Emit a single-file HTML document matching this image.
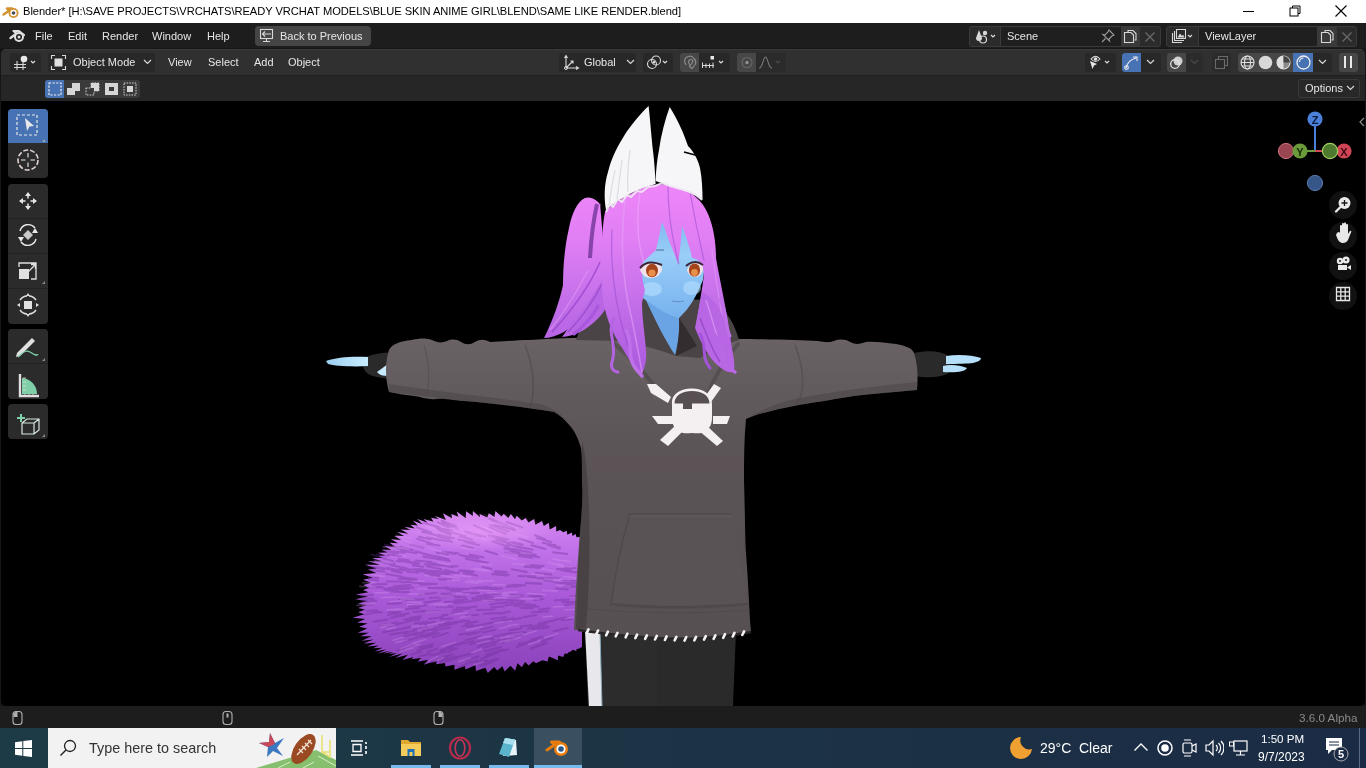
<!DOCTYPE html>
<html><head><meta charset="utf-8">
<style>
*{margin:0;padding:0;box-sizing:border-box}
html,body{width:1366px;height:768px;overflow:hidden;background:#161616;font-family:"Liberation Sans",sans-serif}
.a{position:absolute}
.t{position:absolute;white-space:nowrap;line-height:1;will-change:transform}
#title{left:0;top:0;width:1366px;height:23px;background:#fff}
#topbar{left:0;top:23px;width:1366px;height:26px;background:#1d1d1d;border-bottom:1px solid #171717}
#hdr{left:1px;top:49px;width:1364px;height:26px;background:#303030;border-radius:5px 5px 0 0}
#tset{left:1px;top:75px;width:1364px;height:26px;background:#262626;border-top:1px solid #1e1e1e}
#vp{left:1px;top:101px;width:1364px;height:605px;background:#000;border-radius:0 0 5px 5px}
#status{left:0;top:706px;width:1366px;height:22px;background:#1d1d1d}
#taskbar{left:0;top:728px;width:1366px;height:40px;background:linear-gradient(90deg,#1d3a47 0%,#1c3545 40%,#1b2b45 100%)}
.btn{position:absolute;background:#2b2b2b;border-radius:3px}
.ui{color:#e6e6e6;font-size:11px}
</style></head><body>
<div id="title" class="a">
  <svg class="a" style="left:2px;top:4px" width="18" height="15" viewBox="0 0 18 15">
    <path d="M1.5 10.5 L7.5 6.5 L5 4.5 L10 4.5 L14.5 7.5" fill="none" stroke="#d4922e" stroke-width="2.4" stroke-linecap="round" stroke-linejoin="round"/>
    <circle cx="11.5" cy="9" r="5" fill="#d4922e"/><circle cx="11.5" cy="9" r="3.2" fill="#fff"/><circle cx="11.5" cy="9" r="1.8" fill="#4a4a4a"/>
  </svg>
  <div class="t" style="left:23px;top:6px;font-size:11.15px;color:#000;letter-spacing:-0.05px">Blender* [H:\SAVE PROJECTS\VRCHATS\READY VRCHAT MODELS\BLUE SKIN ANIME GIRL\BLEND\SAME LIKE RENDER.blend]</div>
  <div class="a" style="left:1243px;top:11px;width:11px;height:1px;background:#000"></div>
  <svg class="a" style="left:1288px;top:4px" width="14" height="14" viewBox="0 0 14 14"><rect x="2" y="4" width="8" height="8" fill="none" stroke="#000" stroke-width="1"/><path d="M4.5 4 V2 H12 V9.5 H10" fill="none" stroke="#000" stroke-width="1"/></svg>
  <svg class="a" style="left:1334px;top:4px" width="14" height="14" viewBox="0 0 14 14"><path d="M1.5 1.5 L12.5 12.5 M12.5 1.5 L1.5 12.5" stroke="#000" stroke-width="1.1"/></svg>
</div>
<div id="topbar" class="a">
  <svg class="a" style="left:9px;top:5px" width="17" height="15" viewBox="0 0 17 15">
    <path d="M1.5 10 L7.5 5.5 L4.5 3 L10 3 L15 7" fill="none" stroke="#e0e0e0" stroke-width="2.2" stroke-linecap="round" stroke-linejoin="round"/>
    <circle cx="10" cy="9" r="5" fill="#e0e0e0"/><circle cx="10" cy="9" r="3" fill="#1d1d1d"/><circle cx="10" cy="9" r="1.5" fill="#e0e0e0"/>
  </svg>
  <div class="t ui" style="left:35px;top:8px">File</div>
  <div class="t ui" style="left:68px;top:8px">Edit</div>
  <div class="t ui" style="left:102px;top:8px">Render</div>
  <div class="t ui" style="left:152px;top:8px">Window</div>
  <div class="t ui" style="left:207px;top:8px">Help</div>
  <div class="btn" style="left:255px;top:3px;width:116px;height:20px;background:#454545;border-radius:4px"></div>
  <svg class="a" style="left:259px;top:5px" width="15" height="16" viewBox="0 0 15 16"><rect x="1.5" y="1.5" width="12" height="9" fill="none" stroke="#d8d8d8" stroke-width="1.1"/><path d="M7.5 10.5 V13.5 M4 13.5 H11 M12 6 H3.5 M6 3.5 L3.5 6 L6 8.5" fill="none" stroke="#d8d8d8" stroke-width="1.1"/></svg>
  <div class="t ui" style="left:280px;top:8px">Back to Previous</div>
  <!-- scene -->
  <div class="btn" style="left:969px;top:3px;width:192px;height:21px;background:#2b2b2b;border:1px solid #3a3a3a"></div>
  <div class="a" style="left:1000px;top:4px;width:121px;height:19px;background:#1f1f1f;border-left:1px solid #3a3a3a"></div>
  <div class="a" style="left:1121px;top:4px;width:19px;height:19px;background:#3a3a3a"></div>
  <svg class="a" style="left:974px;top:5px" width="24" height="17" viewBox="0 0 24 17"><path d="M5 2 L2 10 A3 3 0 0 0 8 10 Z" fill="#d8d8d8"/><circle cx="11" cy="5" r="2.2" fill="#d8d8d8"/><circle cx="9" cy="11.5" r="3.5" fill="none" stroke="#d8d8d8" stroke-width="1.2"/><path d="M17 7 L19 9 L21 7" fill="none" stroke="#d8d8d8" stroke-width="1.2"/></svg>
  <div class="t ui" style="left:1007px;top:8px">Scene</div>
  <svg class="a" style="left:1100px;top:5px" width="16" height="16" viewBox="0 0 16 16"><path d="M9 2 L14 7 L12 8 L9 11 L9.5 13 L3 6.5 L5 7 L8 4 Z M5.5 10.5 L2 14" fill="none" stroke="#9a9a9a" stroke-width="1.1"/></svg>
  <svg class="a" style="left:1123px;top:6px" width="15" height="15" viewBox="0 0 15 15"><path d="M5 3 V1.5 H10 L13 4.5 V11 H11.5 M1.5 3.5 H8 L10.5 6 V13.5 H1.5 Z" fill="none" stroke="#d8d8d8" stroke-width="1.1"/></svg>
  <svg class="a" style="left:1144px;top:8px" width="12" height="12" viewBox="0 0 12 12"><path d="M1.5 1.5 L10.5 10.5 M10.5 1.5 L1.5 10.5" stroke="#6a6a6a" stroke-width="1.2"/></svg>
  <!-- viewlayer -->
  <div class="btn" style="left:1166px;top:3px;width:191px;height:21px;background:#2b2b2b;border:1px solid #3a3a3a"></div>
  <div class="a" style="left:1198px;top:4px;width:119px;height:19px;background:#1f1f1f;border-left:1px solid #3a3a3a"></div>
  <div class="a" style="left:1317px;top:4px;width:20px;height:19px;background:#3a3a3a"></div>
  <svg class="a" style="left:1171px;top:5px" width="24" height="17" viewBox="0 0 24 17"><path d="M1.5 5 V14.5 H11 M3.5 3 V12.5 H13 M5.5 1.5 H14.5 V10.5 H5.5 Z" fill="none" stroke="#d8d8d8" stroke-width="1.1"/><path d="M6.5 9.5 L9 5.5 L11 8 L12 6.5 L13.5 9.5 Z" fill="#d8d8d8"/><path d="M17 7 L19 9 L21 7" fill="none" stroke="#d8d8d8" stroke-width="1.2"/></svg>
  <div class="t ui" style="left:1205px;top:8px">ViewLayer</div>
  <svg class="a" style="left:1320px;top:6px" width="15" height="15" viewBox="0 0 15 15"><path d="M5 3 V1.5 H10 L13 4.5 V11 H11.5 M1.5 3.5 H8 L10.5 6 V13.5 H1.5 Z" fill="none" stroke="#d8d8d8" stroke-width="1.1"/></svg>
  <svg class="a" style="left:1341px;top:8px" width="12" height="12" viewBox="0 0 12 12"><path d="M1.5 1.5 L10.5 10.5 M10.5 1.5 L1.5 10.5" stroke="#6a6a6a" stroke-width="1.2"/></svg>
</div>
<div id="hdr" class="a">
  <div class="a" style="left:3px;top:0;width:1358px;height:1px;background:#3a3a3a"></div>
  <!-- editor type -->
  <div class="btn" style="left:9px;top:4px;width:31px;height:19px;background:#282828"></div>
  <svg class="a" style="left:11px;top:5px" width="28" height="17" viewBox="0 0 28 17"><path d="M2 10.5 H14 M2 13.5 H14 M5 7 V16 M11 7 V16" stroke="#d8d8d8" stroke-width="1.1" fill="none"/><circle cx="12" cy="5" r="3.3" fill="#e8e8e8"/><path d="M19 7 L21 9 L23 7" fill="none" stroke="#d8d8d8" stroke-width="1.2"/></svg>
  <!-- mode -->
  <div class="btn" style="left:47px;top:4px;width:107px;height:19px;background:#282828"></div>
  <svg class="a" style="left:49px;top:4.5px" width="17" height="17" viewBox="0 0 17 17"><path d="M1.5 5 V1.5 H5 M12 1.5 H15.5 V5 M15.5 12 V15.5 H12 M5 15.5 H1.5 V12" fill="none" stroke="#d8d8d8" stroke-width="1.1"/><rect x="4.5" y="4.5" width="8" height="8" fill="#e0e0e0"/></svg>
  <div class="t ui" style="left:72px;top:8px">Object Mode</div>
  <svg class="a" style="left:142px;top:10px" width="9" height="6" viewBox="0 0 9 6"><path d="M1 1 L4.5 4.5 L8 1" fill="none" stroke="#d8d8d8" stroke-width="1.2"/></svg>
  <div class="t ui" style="left:167px;top:8px">View</div>
  <div class="t ui" style="left:207px;top:8px">Select</div>
  <div class="t ui" style="left:253px;top:8px">Add</div>
  <div class="t ui" style="left:287px;top:8px">Object</div>
  <!-- global -->
  <div class="btn" style="left:558px;top:4px;width:77px;height:19px;background:#282828"></div>
  <svg class="a" style="left:562px;top:4px" width="18" height="19" viewBox="0 0 18 19"><path d="M3 15 V3 M1.5 5 L3 2.5 L4.5 5 M3 15 H15 M13 13.5 L15.5 15 L13 16.5 M3 15 L10 8 M7.5 8 H10 V10.5" fill="none" stroke="#d8d8d8" stroke-width="1.1"/><circle cx="3" cy="15" r="1.5" fill="none" stroke="#d8d8d8"/></svg>
  <div class="t ui" style="left:583px;top:8px">Global</div>
  <svg class="a" style="left:625px;top:10px" width="9" height="6" viewBox="0 0 9 6"><path d="M1 1 L4.5 4.5 L8 1" fill="none" stroke="#d8d8d8" stroke-width="1.2"/></svg>
  <!-- pivot -->
  <div class="btn" style="left:642px;top:4px;width:30px;height:19px;background:#282828"></div>
  <svg class="a" style="left:645px;top:5px" width="26" height="17" viewBox="0 0 26 17"><circle cx="6" cy="10" r="4.5" fill="none" stroke="#d8d8d8" stroke-width="1.1"/><circle cx="10" cy="6.5" r="4.5" fill="none" stroke="#d8d8d8" stroke-width="1.1"/><circle cx="8" cy="8.3" r="1.3" fill="#e8e8e8"/><path d="M17 7 L19 9 L21 7" fill="none" stroke="#d8d8d8" stroke-width="1.2"/></svg>
  <!-- snap -->
  <div class="btn" style="left:679px;top:4px;width:50px;height:19px;background:#282828"></div>
  <div class="a" style="left:679px;top:4px;width:19px;height:19px;background:#474747;border-radius:3px 0 0 3px"></div>
  <svg class="a" style="left:681px;top:5px" width="16" height="17" viewBox="0 0 16 17"><path d="M4 11 L2.5 7.5 A5.2 5.2 0 0 1 12 4.5 A5.2 5.2 0 0 1 13.5 10 L10 14.5 L7.5 12.5 L10.5 8.5 A1.8 1.8 0 0 0 7 6.5 L6.5 8 L8 12" fill="none" stroke="#8a8a8a" stroke-width="1.2" stroke-linejoin="round"/></svg>
  <svg class="a" style="left:700px;top:5px" width="28" height="17" viewBox="0 0 28 17"><path d="M1 11.5 H13 M1.5 8.5 V14 M5 9.5 V14 M8.5 9.5 V14 M12 8.5 V14" stroke="#d8d8d8" stroke-width="1"/><rect x="9.5" y="2" width="3.5" height="3.5" fill="#e8e8e8"/><path d="M18 7 L20 9 L22 7" fill="none" stroke="#d8d8d8" stroke-width="1.2"/></svg>
  <!-- proportional -->
  <div class="btn" style="left:736px;top:4px;width:49px;height:19px;background:#2b2b2b"></div>
  <div class="a" style="left:736px;top:4px;width:19px;height:19px;background:#474747;border-radius:3px 0 0 3px"></div>
  <svg class="a" style="left:738px;top:5px" width="16" height="17" viewBox="0 0 16 17"><circle cx="8" cy="8.5" r="5" fill="none" stroke="#6a6a6a" stroke-width="1.1"/><circle cx="8" cy="8.5" r="1.6" fill="#9a9a9a"/></svg>
  <svg class="a" style="left:757px;top:5px" width="27" height="17" viewBox="0 0 27 17"><path d="M1 14 C5 14 5 3 7.5 3 C10 3 10 14 14 14" fill="none" stroke="#7a7a7a" stroke-width="1.1"/><path d="M18 7 L20 9 L22 7" fill="none" stroke="#4a4a4a" stroke-width="1.2"/></svg>
  <!-- visibility -->
  <div class="btn" style="left:1084px;top:4px;width:31px;height:19px;background:#282828"></div>
  <svg class="a" style="left:1086px;top:4px" width="28" height="19" viewBox="0 0 28 19"><path d="M4 6 Q8.5 0.5 13 6 Q8.5 11 4 6 Z" fill="none" stroke="#e0e0e0" stroke-width="1.1"/><circle cx="8.5" cy="6" r="1.8" fill="#e0e0e0"/><path d="M3 8 L10 11 L7 12.5 L5.5 16 Z" fill="#e8e8e8"/><path d="M18 8 L20 10 L22 8" fill="none" stroke="#d8d8d8" stroke-width="1.2"/></svg>
  <!-- gizmo -->
  <div class="btn" style="left:1121px;top:4px;width:39px;height:19px;background:#282828"></div>
  <div class="a" style="left:1121px;top:4px;width:19px;height:19px;background:#4772b3;border-radius:3px 0 0 3px"></div>
  <svg class="a" style="left:1122px;top:5px" width="17" height="17" viewBox="0 0 17 17"><path d="M3 14 Q5 6 13 4 M10 3 H14 V7" fill="none" stroke="#f0f0f0" stroke-width="1.1"/><circle cx="3.5" cy="13.5" r="1.8" fill="none" stroke="#f0f0f0" stroke-width="1.1"/></svg>
  <svg class="a" style="left:1145px;top:10px" width="9" height="6" viewBox="0 0 9 6"><path d="M1 1 L4.5 4.5 L8 1" fill="none" stroke="#d8d8d8" stroke-width="1.2"/></svg>
  <!-- overlay -->
  <div class="btn" style="left:1166px;top:4px;width:36px;height:19px;background:#2b2b2b"></div>
  <div class="a" style="left:1166px;top:4px;width:19px;height:19px;background:#474747;border-radius:3px 0 0 3px"></div>
  <svg class="a" style="left:1167px;top:5px" width="17" height="17" viewBox="0 0 17 17"><circle cx="10" cy="7" r="4.5" fill="#d0d0d0"/><circle cx="7" cy="10" r="4.3" fill="none" stroke="#e0e0e0" stroke-width="1.3"/></svg>
  <svg class="a" style="left:1189px;top:10px" width="9" height="6" viewBox="0 0 9 6"><path d="M1 1 L4.5 4.5 L8 1" fill="none" stroke="#4a4a4a" stroke-width="1.2"/></svg>
  <!-- xray -->
  <div class="btn" style="left:1211px;top:4px;width:19px;height:19px;background:#2b2b2b"></div>
  <svg class="a" style="left:1213px;top:6px" width="15" height="15" viewBox="0 0 15 15"><path d="M1.5 4.5 H10.5 V13.5 H1.5 Z M4.5 4.5 V1.5 H13.5 V10.5 H10.5" fill="none" stroke="#6a6a6a" stroke-width="1.1"/></svg>
  <!-- shading -->
  <div class="btn" style="left:1237px;top:4px;width:94px;height:19px;background:#282828"></div>
  <div class="a" style="left:1237px;top:4px;width:75px;height:19px;background:#474747;border-radius:3px 0 0 3px"></div>
  <div class="a" style="left:1292px;top:4px;width:20px;height:19px;background:#4772b3"></div>
  <svg class="a" style="left:1238px;top:5px" width="17" height="17" viewBox="0 0 17 17"><circle cx="8.5" cy="8.5" r="6.5" fill="none" stroke="#e0e0e0" stroke-width="1.1"/><ellipse cx="8.5" cy="8.5" rx="3" ry="6.5" fill="none" stroke="#e0e0e0" stroke-width="1.1"/><path d="M2 8.5 H15 M3 5 H14 M3 12 H14" stroke="#e0e0e0" stroke-width="1"/></svg>
  <svg class="a" style="left:1256px;top:5px" width="17" height="17" viewBox="0 0 17 17"><circle cx="8.5" cy="8.5" r="6.8" fill="#d8d8d8"/></svg>
  <svg class="a" style="left:1274px;top:5px" width="17" height="17" viewBox="0 0 17 17"><circle cx="8.5" cy="8.5" r="6.5" fill="#8a8a8a" stroke="#e0e0e0" stroke-width="1.1"/><path d="M8.5 2 A6.5 6.5 0 0 0 2 8.5 A6.5 6.5 0 0 0 8.5 15 V8.5 Z" fill="#e0e0e0"/><path d="M8.5 8.5 L15 8.5 A6.5 6.5 0 0 0 8.5 2 Z" fill="#444"/></svg>
  <svg class="a" style="left:1294px;top:5px" width="17" height="17" viewBox="0 0 17 17"><circle cx="8.5" cy="8.5" r="6.5" fill="none" stroke="#f0f0f0" stroke-width="1.3"/><path d="M4.5 8 A4 4 0 0 1 8.5 4" fill="none" stroke="#f0f0f0" stroke-width="1.1"/></svg>
  <svg class="a" style="left:1317px;top:10px" width="9" height="6" viewBox="0 0 9 6"><path d="M1 1 L4.5 4.5 L8 1" fill="none" stroke="#d8d8d8" stroke-width="1.2"/></svg>
  <!-- pause -->
  <div class="btn" style="left:1338px;top:4px;width:19px;height:19px;background:#474747"></div>
  <div class="a" style="left:1343px;top:7px;width:2px;height:12px;background:#e8e8e8"></div>
  <div class="a" style="left:1349px;top:7px;width:2px;height:12px;background:#e8e8e8"></div>
</div>
<div id="tset" class="a">
  <div class="btn" style="left:44px;top:4px;width:95px;height:18px;background:#3a3a3a"></div>
  <div class="a" style="left:44px;top:4px;width:19px;height:18px;background:#4772b3;border-radius:3px 0 0 3px"></div>
  <svg class="a" style="left:46px;top:5px" width="92" height="16" viewBox="0 0 92 16">
    <rect x="2" y="2" width="12" height="12" fill="none" stroke="#f0f0f0" stroke-width="1.2" stroke-dasharray="2.2 1.4"/>
    <path d="M20 7 H25 V2 H33 V10 H28 V14 H20 Z" fill="#d6d6d6"/>
    <path d="M39 7 H44 V2 H52 V10 H47 V14 H39 Z" fill="none" stroke="#d6d6d6" stroke-width="1" stroke-dasharray="1.5 1.2"/><path d="M44 2 H52 V10 H47 V7 H44 Z" fill="#d6d6d6"/>
    <path d="M58 2 H71 V14 H58 Z M62 6 V10 H67 V6 Z" fill="#d6d6d6" fill-rule="evenodd"/>
    <rect x="77" y="2" width="12" height="12" fill="none" stroke="#d6d6d6" stroke-width="1" stroke-dasharray="1.5 1.2"/><rect x="80" y="5" width="6" height="6" fill="#d6d6d6"/>
  </svg>
  <div class="btn" style="left:1297px;top:3px;width:62px;height:19px;background:#282828;border:1px solid #3a3a3a"></div>
  <div class="t ui" style="left:1304px;top:7px">Options</div>
  <svg class="a" style="left:1345px;top:9px" width="9" height="6" viewBox="0 0 9 6"><path d="M1 1 L4.5 4.5 L8 1" fill="none" stroke="#d8d8d8" stroke-width="1.2"/></svg>
</div>
<div id="vp" class="a"></div>
<svg class="a" style="left:0;top:0" width="1366" height="768" viewBox="0 0 1366 768">
<defs>
  <clipPath id="vpc"><rect x="1" y="101" width="1364" height="605"/></clipPath>
  <linearGradient id="tailg" x1="0" y1="0" x2="0" y2="1">
    <stop offset="0" stop-color="#d88af2"/><stop offset="0.25" stop-color="#c070e8"/><stop offset="0.55" stop-color="#a858d6"/><stop offset="1" stop-color="#8a42ba"/>
  </linearGradient>
  <linearGradient id="hairg" gradientUnits="userSpaceOnUse" x1="0" y1="185" x2="0" y2="375">
    <stop offset="0" stop-color="#ee86f8"/><stop offset="0.3" stop-color="#e07ef4"/><stop offset="0.6" stop-color="#c470ea"/><stop offset="1" stop-color="#aa58de"/>
  </linearGradient>
  <linearGradient id="hoodg" gradientUnits="userSpaceOnUse" x1="0" y1="337" x2="0" y2="641">
    <stop offset="0" stop-color="#6a6264"/><stop offset="0.2" stop-color="#615a5c"/><stop offset="0.4" stop-color="#5b5355"/><stop offset="1" stop-color="#575052"/>
  </linearGradient>
  <linearGradient id="faceg" x1="0" y1="0" x2="0" y2="1">
    <stop offset="0" stop-color="#7eb8ee"/><stop offset="0.35" stop-color="#98cef8"/><stop offset="1" stop-color="#78b2ee"/>
  </linearGradient>
  <linearGradient id="fingg" x1="0" y1="0" x2="1" y2="0">
    <stop offset="0" stop-color="#9ccff0"/><stop offset="1" stop-color="#c8ecff"/>
  </linearGradient>
  <radialGradient id="tailhl" cx="0.5" cy="0.5" r="0.5">
    <stop offset="0" stop-color="#f4a8fc" stop-opacity="0.55"/><stop offset="1" stop-color="#f4a8fc" stop-opacity="0"/>
  </radialGradient>
</defs>
<g clip-path="url(#vpc)">
  <!-- tail -->
  <path d="M582.0 538.0 L580.8 537.6 L579.4 537.1 L576.5 537.2 L575.6 534.0 L572.5 535.9 L571.9 532.5 L567.3 534.7 L566.7 530.8 L563.3 532.2 L560.1 529.9 L556.3 531.4 L556.1 525.9 L549.7 529.4 L548.8 522.7 L543.8 525.9 L542.0 521.1 L535.4 524.8 L534.2 518.9 L528.4 522.5 L525.8 518.0 L521.8 520.5 L516.7 515.8 L515.0 519.2 L510.9 513.9 L508.3 518.0 L503.7 513.8 L501.6 516.6 L495.4 510.9 L494.4 516.9 L488.9 513.3 L487.2 517.6 L479.6 514.1 L480.1 517.3 L472.9 510.9 L472.8 516.0 L466.1 511.2 L465.8 518.2 L456.7 511.4 L458.4 516.8 L451.4 514.1 L452.0 518.2 L442.9 513.3 L445.9 520.0 L434.9 515.9 L438.7 519.3 L431.1 517.7 L433.5 521.7 L423.6 519.1 L427.8 522.8 L417.3 519.1 L422.9 524.4 L412.7 520.5 L417.9 525.6 L410.2 524.7 L415.0 528.6 L404.2 526.8 L410.5 530.1 L400.8 529.4 L408.3 533.8 L397.0 532.1 L404.0 536.0 L394.4 536.1 L401.5 539.9 L390.9 539.2 L398.0 543.2 L389.5 542.8 L395.4 547.0 L384.3 545.9 L391.3 549.8 L381.8 549.8 L387.7 552.6 L378.0 552.7 L385.3 555.5 L378.4 556.0 L382.8 558.1 L372.1 557.9 L382.2 561.5 L368.1 561.2 L380.0 564.7 L364.9 564.7 L376.9 568.3 L368.2 569.6 L376.3 573.0 L362.5 574.2 L372.7 577.7 L363.1 579.8 L371.2 582.7 L363.2 585.0 L369.4 587.7 L362.9 590.0 L368.5 592.3 L355.8 594.6 L367.9 596.6 L355.5 599.2 L367.6 600.9 L357.8 603.5 L366.7 605.1 L358.0 607.9 L365.1 609.6 L358.2 612.3 L364.4 614.2 L352.6 617.8 L365.3 618.9 L357.1 622.5 L367.6 623.4 L359.1 626.8 L367.2 628.5 L357.8 632.7 L368.9 632.7 L360.2 636.2 L371.6 636.2 L361.7 640.7 L373.6 639.6 L363.5 643.5 L376.2 642.8 L367.2 646.4 L379.0 645.6 L372.9 648.2 L382.5 647.8 L374.5 651.6 L386.2 649.6 L377.6 653.4 L389.9 650.8 L383.6 653.6 L393.5 651.8 L388.7 653.8 L396.7 653.3 L388.9 656.9 L402.5 653.4 L395.3 657.9 L407.9 654.8 L402.5 659.9 L413.6 656.9 L411.3 659.3 L421.0 658.1 L417.6 661.7 L428.4 659.8 L423.6 664.8 L436.8 660.7 L436.1 664.3 L444.8 662.9 L445.5 666.4 L454.4 664.8 L454.5 669.7 L464.8 666.0 L465.5 669.6 L475.4 665.3 L476.0 670.9 L485.3 667.7 L487.8 673.1 L494.2 666.9 L497.2 670.4 L502.4 666.2 L504.6 671.6 L510.5 665.8 L515.1 670.7 L517.5 663.3 L521.8 667.3 L525.1 662.1 L528.7 665.6 L533.2 661.2 L536.1 663.3 L542.3 660.2 L547.6 661.5 L548.9 656.4 L558.0 660.3 L557.9 655.4 L563.3 657.1 L564.8 653.6 L567.3 653.8 L569.3 651.5 L569.9 652.3 L572.8 649.7 L576.3 651.1 L576.6 648.9 L578.6 648.8 L579.6 648.2 L580.5 647.8 L581.3 647.3 L582.0 647.0 Z" fill="url(#tailg)"/>
  <path d="M520.0 547.9 l-12.7 -3.9 M472.8 625.1 l-10.5 1.3 M522.8 596.1 l-14.5 1.1 M543.6 566.1 l-17.2 -1.0 M386.4 584.1 l-14.0 0.2 M406.4 568.3 l-15.8 -3.2 M477.4 660.4 l-9.3 2.9 M414.2 645.6 l-17.0 5.0 M412.6 598.4 l-13.5 0.7 M583.2 595.4 l-12.6 1.0 M477.0 621.6 l-9.5 1.5 M567.9 589.5 l-11.8 -0.9 M411.1 552.1 l-14.7 -3.7 M505.6 533.7 l-14.5 -5.8 M423.6 547.7 l-13.4 -3.3 M459.8 597.4 l-10.4 -0.4 M419.7 629.1 l-15.7 4.5 M397.7 553.9 l-15.1 -3.8 M552.7 581.2 l-16.0 -2.2 M412.6 620.4 l-16.7 4.2 M480.3 631.7 l-13.1 3.3 M376.3 600.8 l-13.6 0.8 M579.2 587.3 l-15.9 -1.0 M555.4 545.2 l-12.8 -2.5 M546.0 623.7 l-16.4 3.2 M501.1 593.6 l-17.8 1.3 M383.7 569.3 l-12.9 -2.9 M509.8 611.6 l-10.9 2.1 M443.0 617.0 l-14.0 1.9 M523.7 632.3 l-17.7 1.9 M532.0 556.5 l-12.1 -3.5 M451.4 532.8 l-11.0 -2.5 M403.5 588.8 l-10.5 -0.2 M461.4 597.0 l-14.4 -0.0 M513.4 602.1 l-11.5 1.1 M535.5 576.5 l-17.1 -0.5 M463.4 589.6 l-17.7 -1.2 M549.3 608.5 l-10.0 1.1 M485.2 536.6 l-12.6 -3.2 M426.2 605.3 l-12.7 1.6 M506.7 571.9 l-11.4 -0.8 M499.4 613.0 l-15.8 0.7 M462.4 611.5 l-9.9 1.1 M387.2 619.4 l-13.8 2.4 M547.6 611.6 l-15.9 0.7 M440.2 600.3 l-15.6 2.1 M450.0 532.6 l-15.6 -6.5 M515.0 530.3 l-11.3 -3.2 M430.8 539.4 l-11.9 -2.7 M570.8 583.7 l-16.2 -1.4 M456.7 658.2 l-16.3 4.9 M449.2 572.5 l-12.5 -1.6 M493.2 637.6 l-13.2 4.2 M407.2 631.8 l-16.7 2.7 M482.5 599.6 l-14.0 1.9 M508.8 539.6 l-15.3 -3.7 M416.9 632.8 l-13.2 3.6 M546.9 643.1 l-15.9 6.0 M484.3 624.5 l-16.0 2.5 M400.5 629.2 l-17.7 3.0 M413.4 581.7 l-11.6 0.5 M436.5 535.2 l-14.4 -3.5 M381.8 586.8 l-14.2 0.8 M416.3 553.3 l-15.2 -2.8 M409.1 560.2 l-10.5 -1.2 M571.0 569.3 l-13.9 -0.3 M514.0 553.6 l-8.9 -1.8 M544.9 625.0 l-14.4 1.4 M439.4 556.9 l-16.6 -3.0 M386.3 558.5 l-14.9 -3.9 M472.0 661.3 l-13.0 6.0 M437.1 564.6 l-9.5 -1.8 M526.8 572.0 l-14.9 -2.8 M545.5 549.0 l-14.0 -3.8 M487.8 562.7 l-11.9 -2.1 M492.9 626.6 l-11.6 2.9 M499.6 531.5 l-10.2 -4.2 M458.3 528.9 l-16.3 -5.8 M511.7 633.0 l-16.1 3.1 M457.0 623.0 l-17.4 3.9 M441.5 569.3 l-14.6 -3.0 M481.1 636.3 l-15.9 4.1 M526.8 643.3 l-10.1 3.8 M448.2 587.5 l-10.1 0.8 M568.7 599.5 l-14.0 0.7 M549.5 608.2 l-10.0 1.5 M567.1 554.1 l-14.0 -1.8 M452.7 606.8 l-16.2 -0.4 M471.9 539.4 l-12.1 -3.2 M483.4 557.5 l-13.8 -3.0 M501.2 588.5 l-12.7 0.1 M484.8 596.8 l-12.8 1.4 M567.8 627.8 l-14.0 3.4 M499.7 528.5 l-9.5 -3.4 M456.1 525.8 l-14.4 -5.1 M493.8 653.5 l-9.2 3.7 M487.3 660.6 l-8.6 2.7 M440.1 527.4 l-16.4 -4.5 M436.3 592.8 l-17.3 1.8 M413.8 562.3 l-17.3 -1.2 M508.4 546.7 l-16.0 -5.5 M397.9 622.4 l-17.3 2.5 M417.6 564.1 l-15.1 -3.2 M420.3 617.7 l-16.0 1.7 M465.8 597.2 l-13.7 -0.9 M431.2 555.6 l-15.6 -4.4 M535.8 554.9 l-11.3 -2.1 M479.0 545.0 l-13.7 -3.0 M542.6 636.7 l-10.8 2.5 M495.1 648.9 l-10.4 2.3 M494.3 599.5 l-16.1 -0.3 M437.8 611.2 l-13.7 0.7 M459.2 572.7 l-10.9 -0.0 M476.7 632.2 l-17.7 2.4 M421.4 651.5 l-9.9 2.9 M531.0 552.5 l-11.1 -2.2 M503.6 524.0 l-12.0 -4.0 M415.8 570.1 l-10.6 -1.1 M413.2 550.2 l-12.8 -3.4 M559.5 548.7 l-11.8 -3.8 M448.5 559.2 l-8.9 -2.2 M455.2 656.5 l-14.8 4.4 M447.9 632.9 l-14.8 4.5 M439.5 575.7 l-9.7 -0.0 M539.1 595.9 l-9.5 -0.0 M500.2 522.8 l-11.0 -4.3 M398.2 624.0 l-11.1 2.4 M400.7 548.7 l-11.3 -2.1 M453.8 647.9 l-10.7 2.7 M493.6 639.3 l-17.4 3.6 M521.0 618.0 l-17.2 3.7 M508.4 531.5 l-12.1 -4.2 M453.1 567.2 l-13.3 -2.3 M457.3 589.3 l-10.5 0.2 M388.7 569.3 l-12.6 -2.4 M523.7 601.0 l-15.3 -0.8 M448.9 527.4 l-11.5 -5.2 M498.1 588.3 l-11.9 -0.8 M445.1 651.8 l-13.6 3.6 M409.3 588.4 l-14.5 1.1 M495.9 659.4 l-14.8 5.9 M452.8 654.4 l-9.1 2.3 M436.5 572.1 l-17.5 -3.1 M418.7 620.0 l-11.1 0.5 M455.4 553.9 l-13.3 -2.2 M506.6 602.1 l-16.3 2.5 M445.0 650.9 l-11.1 4.1 M551.0 541.9 l-14.1 -3.8 M450.0 560.9 l-15.6 -2.4 M423.3 566.7 l-10.5 -1.4 M474.7 542.4 l-16.5 -3.0 M451.7 618.4 l-11.1 0.8 M498.0 659.2 l-17.1 4.8 M431.5 627.7 l-17.8 1.9 M373.9 599.4 l-13.3 0.2 M545.7 643.8 l-11.2 2.8 M454.4 622.1 l-13.6 3.0 M476.4 536.1 l-11.0 -4.5 M399.9 611.8 l-11.5 0.5 M455.9 526.6 l-13.3 -4.2 M466.4 643.1 l-15.2 3.0 M384.6 571.8 l-15.6 -2.3 M485.1 639.5 l-15.4 4.7 M546.3 642.1 l-14.9 5.6 M373.2 604.5 l-11.0 0.5 M513.8 639.6 l-11.8 3.3 M430.0 653.8 l-11.6 2.8 M532.6 549.7 l-15.3 -3.3 M399.7 570.6 l-12.6 -2.7 M457.5 566.2 l-13.8 -0.5 M416.8 579.2 l-15.2 -2.0 M439.5 545.5 l-12.1 -1.7 M508.9 574.7 l-14.6 -2.2 M521.1 586.0 l-15.0 -0.7 M419.1 608.1 l-14.1 1.2 M401.7 588.3 l-17.9 0.5 M457.3 648.1 l-9.4 3.9 M526.0 555.6 l-15.9 -3.2 M560.2 547.4 l-11.3 -2.3 M401.7 572.9 l-9.7 -1.9 M454.3 645.4 l-13.6 5.1 M507.7 649.5 l-15.1 3.6 M443.4 565.3 l-14.4 -2.7 M522.3 545.1 l-9.9 -2.0 M521.5 628.4 l-12.1 1.8 M400.5 612.7 l-12.6 2.2 M420.2 604.9 l-11.4 1.7 M557.7 619.5 l-12.7 3.0 M533.0 608.2 l-13.0 -0.1 M430.4 584.1 l-17.5 -1.5 M499.1 599.9 l-9.8 1.2 M448.7 574.2 l-15.5 -0.9 M472.2 572.3 l-13.1 -1.9 M382.8 587.3 l-12.6 0.1 M450.1 539.4 l-12.2 -2.8 M405.0 615.3 l-14.4 2.5 M548.1 627.6 l-15.9 1.7 M487.0 598.1 l-10.0 0.9 M480.6 536.7 l-13.2 -5.0 M481.7 562.1 l-15.7 -3.3 M468.3 601.7 l-13.0 1.6 M531.0 624.9 l-10.2 1.8 M378.2 580.4 l-9.6 -1.1 M578.1 603.2 l-13.4 1.9 M434.5 628.9 l-11.2 1.8 M473.9 571.8 l-12.8 -1.5 M485.2 600.1 l-12.6 -0.2 M581.3 572.8 l-14.3 -1.8 M503.2 606.4 l-11.8 0.9 M388.6 555.8 l-11.3 -1.4 M558.9 578.3 l-11.6 -0.4 M440.9 565.6 l-16.3 -1.3 M378.6 611.7 l-13.7 2.7 M535.1 605.0 l-9.0 1.1 M541.5 584.1 l-15.7 -1.1 M465.0 535.7 l-11.5 -2.9 M515.9 600.2 l-10.0 -0.4 M579.8 602.0 l-17.3 -0.1 M487.1 643.9 l-9.5 3.4 M477.6 621.4 l-12.2 2.6 M532.8 543.0 l-13.6 -4.4 M404.4 570.5 l-14.2 -1.5 M495.5 644.3 l-11.7 3.5 M522.8 553.0 l-11.2 -1.7 M551.1 574.6 l-15.4 -1.6 M390.7 564.0 l-16.1 -4.0 M537.8 638.9 l-9.4 2.9 M497.3 652.9 l-16.2 6.0 M432.6 646.6 l-15.1 3.6 M372.5 598.6 l-11.3 -0.1 M397.2 590.7 l-11.4 -0.6 M503.3 599.6 l-15.6 0.7 M575.9 572.4 l-15.9 -2.5 M450.2 627.4 l-17.2 3.2 M513.9 528.8 l-15.7 -6.8 M436.7 648.8 l-9.0 3.1 M542.2 596.2 l-9.7 0.3 M460.6 590.9 l-9.7 -0.1 M583.9 602.2 l-10.2 0.1 M476.7 606.6 l-15.1 1.5 M553.0 579.1 l-12.0 -1.2 M539.0 557.3 l-14.1 -2.5 M517.8 586.2 l-11.1 0.6 M401.3 556.0 l-13.2 -1.7 M420.9 616.2 l-11.2 1.5 M419.6 563.2 l-11.9 -1.2 M543.5 599.0 l-9.7 0.9 M416.4 580.2 l-17.8 -1.6 M454.0 538.3 l-15.7 -3.5 M473.6 640.8 l-8.8 2.3 M578.7 586.1 l-12.3 -1.4 M409.0 570.1 l-9.3 -1.4 M484.9 660.1 l-9.3 2.8 M436.7 632.1 l-16.9 3.6 M470.1 608.5 l-16.6 1.3 M416.8 637.9 l-13.0 3.6 M425.8 610.8 l-12.3 1.1 M438.4 571.5 l-16.9 -1.5 M487.9 587.1 l-12.0 0.7 M432.1 543.6 l-14.8 -4.7 M431.1 532.5 l-14.3 -5.1 M478.4 656.4 l-13.0 4.1 M478.2 558.4 l-14.0 -2.1 M430.2 584.4 l-9.8 0.2 M552.1 637.7 l-10.7 3.6 M462.6 601.3 l-17.5 0.8 M432.5 644.2 l-13.1 3.2 M373.1 594.8 l-12.1 0.9 M494.4 659.5 l-13.9 5.0 M522.2 595.4 l-11.8 -0.4 M539.9 568.0 l-11.4 -1.4 M486.9 589.0 l-15.7 -1.1 M496.9 554.2 l-11.5 -3.4 M446.9 597.0 l-17.5 1.0 M458.3 553.3 l-13.2 -1.4 M464.1 620.8 l-15.7 2.5 M423.8 599.2 l-18.0 0.8 M438.9 633.0 l-14.3 3.8 M427.8 622.2 l-12.9 1.0 M495.2 629.6 l-12.3 2.8 M504.7 525.0 l-14.0 -6.4 M394.6 563.6 l-11.0 -0.8 M525.2 585.3 l-12.3 -0.6 M469.0 589.0 l-16.9 -0.4 M542.4 578.2 l-15.0 -0.3 M513.6 618.3 l-12.7 2.2 M538.1 556.9 l-14.1 -3.5 M497.4 641.2 l-16.1 3.8 M526.1 632.3 l-15.3 3.5 M524.6 602.2 l-13.7 2.1 M541.3 566.7 l-15.5 -0.6 M493.9 597.2 l-13.4 -0.6 M566.4 617.5 l-11.4 2.3 M494.4 661.0 l-11.2 4.9 M434.7 621.8 l-14.8 3.4 M428.7 571.8 l-13.5 -2.8 M532.1 557.7 l-13.3 -1.8 M494.5 609.4 l-17.9 0.6 M505.6 540.5 l-16.9 -5.2 M463.7 642.1 l-16.5 5.0 M418.3 572.6 l-11.0 -0.6 M522.4 527.4 l-15.7 -5.3 M501.2 647.3 l-9.4 1.9 M522.7 544.5 l-11.2 -2.4 M439.6 588.1 l-11.6 -0.1 M447.9 555.3 l-11.3 -2.8 M506.2 616.9 l-15.1 2.0 M454.6 593.6 l-13.2 0.2 M553.6 620.5 l-14.9 3.0 M488.7 595.2 l-11.7 1.1 M400.9 576.4 l-14.6 -2.4 M576.5 583.3 l-15.9 -0.4 M406.5 587.6 l-17.1 0.2 M467.2 599.5 l-12.0 0.7 M513.8 550.2 l-9.5 -1.6 M580.6 601.8 l-9.9 0.8 M548.8 626.6 l-15.8 1.4 M545.1 539.1 l-10.1 -3.9 M408.9 613.3 l-14.2 2.9 M409.1 592.3 l-17.7 -0.9 M571.7 619.2 l-9.6 0.7 M432.4 644.7 l-14.2 5.6 M507.4 575.5 l-15.4 -1.3 M477.2 575.6 l-13.6 -2.5 M441.3 540.2 l-14.1 -2.6 M479.1 593.0 l-15.9 0.3 M410.1 626.7 l-9.4 2.5 M536.9 626.4 l-9.2 2.3 M452.6 531.0 l-9.1 -2.3 M393.0 561.0 l-10.4 -2.6 M510.2 543.2 l-10.2 -2.6 M401.2 603.2 l-13.6 0.5 M376.8 610.3 l-10.7 0.6 M431.2 561.9 l-15.7 -1.5 M381.8 612.3 l-11.5 0.8 M410.5 585.1 l-16.7 1.1 M449.2 622.1 l-10.4 2.4 M491.6 568.9 l-8.8 -2.0 M440.9 559.3 l-17.7 -2.5 M575.6 581.1 l-11.8 -0.9 M504.9 542.3 l-9.0 -2.5 M530.2 603.9 l-14.9 2.4 M450.6 534.9 l-13.6 -5.7 M431.7 634.2 l-14.4 3.1 M473.8 557.5 l-14.2 -2.5 M502.7 620.3 l-17.5 3.7 M378.3 577.9 l-9.7 -0.3 M401.1 581.5 l-14.4 0.0 M433.5 573.2 l-16.8 -2.7 M517.9 550.1 l-12.8 -2.5 M575.7 568.3 l-10.3 -0.7 M472.4 653.1 l-15.6 4.1 M502.0 588.6 l-11.7 0.8 M510.8 529.0 l-16.8 -4.0 M439.1 626.6 l-16.6 4.1 M478.2 614.7 l-12.2 1.1 M503.1 649.5 l-17.0 4.9 M451.1 579.6 l-12.3 -0.4 M453.7 614.4 l-11.2 0.9 M435.2 574.7 l-9.9 -1.6 M424.5 631.9 l-10.6 3.1 M473.1 548.2 l-11.3 -2.8 M509.8 638.4 l-11.8 2.1 M468.6 607.8 l-11.9 -0.2 M447.9 656.4 l-15.8 5.8 M491.7 532.6 l-9.3 -3.2 M536.3 614.9 l-13.1 2.3 M521.0 603.5 l-16.0 2.0 M436.7 583.9 l-13.2 -0.4 M540.9 567.8 l-16.6 -1.0 M489.6 532.0 l-15.6 -6.6 M538.7 606.6 l-15.0 0.9 M413.1 587.4 l-11.3 0.1 M398.5 547.6 l-13.5 -2.9 M452.3 541.8 l-16.2 -2.6 M535.8 640.7 l-17.1 3.3 M404.5 552.7 l-17.0 -2.0 M540.3 583.6 l-13.1 -0.7 M469.0 620.8 l-15.3 1.7 M453.9 571.9 l-9.1 -1.8" stroke="#6a2c94" stroke-width="2" stroke-opacity="0.35" stroke-linecap="round" fill="none"/>
  <path d="M467.1 612.5 l-14.7 2.5 M528.4 537.5 l-12.7 -3.3 M451.7 603.3 l-16.8 2.0 M470.9 615.7 l-10.7 1.8 M510.4 625.6 l-10.6 2.8 M482.7 626.5 l-16.2 3.6 M432.4 627.3 l-14.5 2.8 M492.3 564.8 l-12.4 -0.9 M427.8 589.0 l-10.1 -0.3 M509.7 597.4 l-16.6 0.9 M437.9 656.4 l-9.9 4.7 M409.0 548.6 l-16.4 -2.0 M482.4 582.5 l-14.2 -2.2 M411.3 542.8 l-12.8 -4.8 M540.7 640.2 l-12.0 4.1 M522.2 633.1 l-15.6 3.1 M509.6 639.4 l-9.3 2.6 M531.0 553.8 l-10.0 -1.2 M474.2 549.6 l-11.9 -2.0 M425.3 639.5 l-11.8 3.4 M493.3 590.7 l-15.1 -0.7 M394.1 624.4 l-13.7 3.6 M489.4 636.2 l-9.7 1.4 M517.3 592.0 l-13.8 0.6 M571.1 579.6 l-16.4 -0.5 M489.7 640.6 l-13.0 2.7 M453.5 597.1 l-13.6 -0.3 M486.7 540.6 l-14.8 -5.8 M543.2 580.5 l-17.1 -2.5 M414.3 599.5 l-13.7 -0.4 M552.2 616.1 l-9.1 0.9 M420.7 602.6 l-13.1 -0.6 M424.9 548.0 l-15.0 -4.1 M518.4 624.2 l-10.5 1.6 M489.7 570.9 l-13.3 -2.5 M422.3 604.5 l-15.3 0.4 M489.6 529.4 l-8.6 -3.5 M576.6 616.8 l-11.6 1.9 M536.3 630.8 l-12.8 4.0 M557.8 579.4 l-12.9 -0.7 M436.0 577.3 l-11.0 -1.8 M560.4 581.2 l-16.1 -1.9 M447.1 605.8 l-9.4 -0.2 M554.0 571.1 l-13.0 -2.3 M529.1 564.9 l-17.1 -1.1 M564.3 606.5 l-11.1 0.4 M516.1 559.5 l-14.3 -3.7 M375.5 587.2 l-15.7 -0.8 M514.1 635.4 l-13.3 3.1 M519.9 596.1 l-17.5 -0.8 M404.7 609.2 l-11.1 0.9 M496.8 592.8 l-9.3 0.2 M478.1 583.2 l-12.9 -1.2 M406.1 556.2 l-10.3 -1.5 M462.2 529.5 l-9.1 -2.0 M470.5 657.9 l-11.7 3.7 M444.2 622.2 l-16.5 2.9 M470.7 576.9 l-16.5 -1.7 M459.2 580.3 l-11.5 0.1 M390.7 623.7 l-9.9 1.5 M424.4 594.1 l-16.2 -0.2 M423.9 625.4 l-11.8 1.6 M494.0 581.1 l-15.4 -0.5 M461.1 612.7 l-12.3 2.5 M449.2 556.9 l-9.1 -2.6 M436.7 529.8 l-10.1 -3.4 M412.9 648.1 l-12.9 3.6 M579.0 578.3 l-15.2 -1.9 M563.5 566.1 l-15.4 -3.4 M507.6 593.7 l-14.1 -1.0 M507.3 585.0 l-14.3 -0.2 M420.0 644.0 l-13.9 5.3 M545.1 594.7 l-17.9 -1.4 M491.2 636.1 l-13.2 2.3 M557.8 633.6 l-13.3 4.1 M576.9 609.5 l-12.2 0.3 M469.4 594.0 l-17.5 -0.4 M517.2 554.7 l-12.2 -3.4 M423.9 581.1 l-12.1 0.1 M455.7 642.3 l-14.2 4.4 M583.4 596.7 l-12.6 0.6 M582.0 580.0 l-9.0 -1.2 M392.5 563.1 l-17.6 -2.1 M572.0 567.3 l-13.3 -1.3 M450.6 565.2 l-13.1 -2.6 M375.0 582.8 l-12.4 -0.1 M569.9 586.4 l-13.3 -1.1 M494.1 600.7 l-12.0 -0.3 M412.2 598.2 l-14.5 -0.7 M481.0 649.1 l-9.7 3.8 M445.4 552.8 l-16.8 -4.9 M374.6 603.6 l-17.8 1.8 M484.9 571.1 l-13.3 -2.3 M483.3 661.9 l-8.9 2.6 M520.8 596.0 l-14.2 1.1 M543.5 574.9 l-11.6 -0.8 M399.8 548.8 l-16.8 -2.1 M443.9 657.6 l-9.5 3.9 M410.8 538.4 l-14.8 -3.0 M395.3 597.0 l-13.9 0.6 M441.4 603.3 l-11.6 1.4 M456.9 525.8 l-9.6 -4.2 M388.0 592.6 l-13.3 0.4 M415.8 643.1 l-15.2 5.8 M520.1 637.6 l-14.7 4.6 M407.1 640.2 l-11.5 2.3 M511.0 527.7 l-13.7 -6.1 M561.4 564.6 l-10.6 -1.1 M395.8 627.0 l-9.2 2.4 M403.7 637.3 l-10.7 2.9 M511.8 620.9 l-17.4 2.0 M570.4 561.6 l-17.4 -2.3 M401.4 600.7 l-11.4 1.0 M464.0 534.0 l-13.0 -2.7 M384.2 576.6 l-13.0 -2.1 M557.2 591.0 l-14.3 -0.6 M459.1 577.8 l-16.9 -2.1 M438.1 611.6 l-12.7 0.8 M539.0 598.9 l-17.8 0.0 M400.2 608.9 l-13.1 1.2" stroke="#e4a8f8" stroke-width="1.6" stroke-opacity="0.25" stroke-linecap="round" fill="none"/>
  <ellipse cx="480" cy="532" rx="75" ry="20" fill="url(#tailhl)"/>
  <!-- legs -->
  <path d="M585 630 L663 636 L660 706 L588 706 Z" fill="#2c2c2c"/>
  <path d="M657 636 L736 630 L733 706 L657 706 Z" fill="#2a2a2a"/>
  <path d="M585 630 L600 632 L602 706 L589 706 Z" fill="#e8e8ec"/>
  <path d="M600 632 L602 706" stroke="#8ab" stroke-width="1"/>
  <!-- gloves -->
  <path d="M366 357 C378 352 396 351 406 355 C410 362 410 372 406 377 C396 380 380 379 370 375 C362 371 361 362 366 357 Z" fill="#2a2a2a"/>
  <path d="M914 353 C928 350 940 351 947 355 C951 360 951 370 947 374 C938 378 926 378 914 376 Z" fill="#2a2a2a"/>
  <!-- fingers -->
  <path d="M326 361 C335 357 355 356 368 357 L368 366 C352 367 335 366 328 364 Z" fill="url(#fingg)"/>
  <path d="M377 372 L388 364 L391 374 C386 377 380 376 377 372 Z" fill="#c8ecff"/>
  <path d="M946 356 C958 354 972 355 981 358 C980 363 972 364 946 364 Z" fill="#b6e0fa"/>
  <path d="M943 366 C950 364 960 365 967 368 C965 372 955 373 943 372 Z" fill="#b6e0fa"/>
  <!-- hoodie body + sleeves -->
  <path d="M389 350 C392 344 400 341 412 340 C420 338 426 338 432 340 C438 343 442 343 447 341 C452 339 456 339 461 342 C466 345 470 345 475 342 C480 339 484 339 490 342 C500 342 515 340 530 340 C560 338 590 337 620 338 C660 340 700 338 735 339 C770 339 800 340 818 341 C824 342 828 343 834 341 C840 339 845 339 850 342 C856 345 860 344 866 342 C875 341 885 343 896 344 C906 346 912 348 914 353 C918 365 918 378 917 390 C896 392 870 394 854 396 C830 400 810 403 794 406 C775 410 760 413 746 419 C744 440 744 460 744 480 C745 510 745 540 746 553 C748 580 749 600 750 620 L751 632 C735 635 715 638 690 639 C660 639 620 636 578 630 L574 630 C575 600 577 570 580 532 C582 510 583 495 582 482 C582 465 582 455 581 448 C578 438 575 432 571 427 C565 420 560 415 554 412 C530 408 500 404 464 401 C450 400 444 398 436 399 C428 400 422 397 414 396 C406 395 398 394 389 392 C385 378 385 362 389 350 Z" fill="url(#hoodg)"/>
  <!-- hood area -->
  
  <!-- sleeve shading -->
  <path d="M389 392 C415 395 440 398 464 401 C500 404 530 408 554 412 C562 416 568 422 574 430 C566 418 555 408 540 404 C500 398 440 392 389 384 Z" fill="#403a3c" opacity="0.35"/>
  <path d="M917 390 C896 392 870 394 854 396 C830 400 810 403 794 406 C775 410 760 413 746 419 C762 409 780 402 800 398 C840 390 880 386 917 382 Z" fill="#403a3c" opacity="0.35"/>
  <path d="M582 440 C590 470 592 560 586 628 L576 629 C577 600 578 570 580 532 C582 510 583 495 582 482 Z" fill="#3a3335" opacity="0.5"/>
  <!-- sleeve folds -->
  <path d="M525 345 C535 370 535 395 530 407" fill="none" stroke="#4f494b" stroke-width="1.5" opacity="0.6"/>
  <path d="M795 345 C805 370 805 395 796 405" fill="none" stroke="#4f494b" stroke-width="1.5" opacity="0.6"/>
  <path d="M424 345 C430 365 430 385 426 397" fill="none" stroke="#534d4f" stroke-width="1.2" opacity="0.6"/>
  <!-- hood drape -->
  <path d="M612 342 C632 358 650 378 662 398" fill="none" stroke="#4a4345" stroke-width="4" opacity="0.55" stroke-linecap="round"/>
  <path d="M738 344 C724 360 714 378 707 396" fill="none" stroke="#4a4345" stroke-width="4" opacity="0.55" stroke-linecap="round"/>
  <path d="M608 346 C628 362 646 382 656 400" fill="none" stroke="#6e6668" stroke-width="1.5" opacity="0.5"/>
  <!-- pocket -->
  <path d="M630 514 L731 514 C738 540 744 580 748 606 L611 606 C615 575 622 540 630 514 Z" fill="#5a5355"/>
  <path d="M630 514 L731 514 M611 606 C615 575 622 540 630 514" fill="none" stroke="#49434a" stroke-width="1.6" opacity="0.55"/>
  <path d="M630 516 L731 516" stroke="#6a6264" stroke-width="1" opacity="0.5"/>
  <path d="M612 604 C650 608 700 608 748 604" fill="none" stroke="#463f42" stroke-width="2.5" opacity="0.5"/>
  <path d="M576 608 C640 614 700 614 750 610" fill="none" stroke="#4b4547" stroke-width="1.2" opacity="0.5"/>
  <path d="M578 630 C620 636 660 639 690 639 C715 638 735 635 751 632" fill="none" stroke="#2a2628" stroke-width="2.5"/>
  <path d="M586.7 632.9 L588.5 629.3 M596.3 634.1 L598.1 630.5 M606.1 635.3 L607.9 631.7 M615.7 636.4 L617.5 632.8 M625.6 637.3 L627.4 633.7 M635.3 638.2 L637.1 634.6 M645.1 638.9 L646.9 635.3 M655.0 639.5 L656.8 635.9 M664.9 640.0 L666.6 636.4 M674.6 640.4 L676.4 636.8 M684.5 640.6 L686.3 637.0 M694.3 640.4 L696.1 636.8 M704.0 639.7 L705.8 636.1 M713.6 638.9 L715.4 635.3 M723.2 637.8 L725.0 634.2 M732.7 636.5 L734.5 632.9 M742.3 635.0 L744.1 631.4" stroke="#f2f2f2" stroke-width="2.6" stroke-linecap="round"/>
  <!-- logo -->
  <g fill="#f4f0f2">
    <path d="M647 384 L656 384 L671 397 L668 403 L651 393 Z"/>
    <path d="M714 384 L721 388 L711 402 L704 398 Z"/>
    <path d="M652 416 L674 416 L674 424 L658 424 Z"/>
    <path d="M713 416 L730 416 L727 424 L713 424 Z"/>
    <path d="M676 425 L684 430 L668 446 L660 440 Z"/>
    <path d="M698 430 L706 425 L723 441 L717 446 Z"/>
    <path d="M672 404 C671 394 681 388.5 692 388.5 C703 388.5 712 394 712 404 L712 418 C712 426 708 430 704 432 C700 434 696 433 692 433 C688 433 684 434 680 432 C676 430 672 426 672 418 Z"/>
  </g>
  <path d="M674.5 403.5 C674.5 395 683 391 692 391 C701 391 709.5 395 709.5 403.5 L692 403.5 L692 409 L683 409 L683 403.5 Z" fill="#574f52"/>
  <!-- hood behind head -->
  <path d="M576 340 C582 322 592 304 606 297 L712 300 C726 310 734 322 739 340 C725 344 712 350 700 358 L676 356 C660 350 640 344 620 341 Z" fill="#4a4446"/>
  <!-- back hair: ponytail -->
  <path d="M601 206 C598 200 591 196 585 198 C577 202 572 213 569 228 C565 245 563 265 563 285 C560 300 553 320 544 338 C556 338 570 330 582 318 C595 305 606 292 614 282 L604 250 L600 203 Z" fill="url(#hairg)"/>
  <path d="M597 204 C593 222 591 240 590 258" stroke="#6a3090" stroke-width="4" fill="none" opacity="0.75"/>
  <path d="M600 262 C590 285 574 308 552 332" stroke="#9040c8" stroke-width="1.6" fill="none" opacity="0.7"/>
  <path d="M588 270 C578 290 566 310 550 330" stroke="#e0a0f6" stroke-width="1.3" fill="none" opacity="0.55"/>
  <path d="M608 268 C598 290 584 310 570 326 L562 337 C578 336 592 326 602 314 C608 306 611 296 613 288 Z" fill="#b866e4"/>
  <path d="M604 280 C594 300 582 318 568 332" stroke="#8e42c4" stroke-width="1.3" fill="none" opacity="0.7"/>
  <!-- neck + face -->
  <path d="M645 298 C655 320 665 340 675 355 C678 343 680 330 679 316 Z" fill="#6aa4e4"/>
  <path d="M634 220 L705 220 C706 250 705 266 703 280 C697 295 690 308 679 318 C670 316 660 310 650 303 C641 297 635 292 633 285 C632 270 632 250 634 236 Z" fill="url(#faceg)"/>
  <ellipse cx="652" cy="289" rx="10" ry="7" fill="#b8e0ff" opacity="0.6"/>
  <ellipse cx="692" cy="288" rx="9" ry="7" fill="#b8e0ff" opacity="0.55"/>
  <path d="M679 318 C686 328 692 338 697 346 L676 356 C678 345 680 330 679 318 Z" fill="#332d2f"/>
  <path d="M672 301 C676 302 680 302 684 301" stroke="#5a7ab8" stroke-width="1" fill="none" opacity="0.7"/>
  <!-- front hair: top, bangs, side locks -->
  <path d="M605 212 C612 204 625 196 640 189 C655 183 668 183 680 188 C693 193 702 200 708 214 C714 228 716 244 716 258 C718 270 721 284 724 300 C728 320 732 345 734 368 C730 372 724 370 718 362 C710 350 702 338 696 326 C698 312 701 296 703 282 C705 272 703 266 700 262 C697 259 694 258 692 258 C690 248 686 236 682 226 C681 240 680 252 678 264 C675 255 671 246 668 238 C666 232 664 226 662 222 C660 232 658 242 656 250 C652 254 647 258 643 262 C641 270 642 280 645 290 C644 294 643 298 642 303 C642 318 645 335 646 350 C647 362 644 372 640 376 C633 366 627 356 621 346 C613 334 607 320 604 305 C601 290 601 270 602 250 C602 235 603 222 605 212 Z" fill="url(#hairg)"/>
  <!-- strand detail lines -->
  <g fill="none" stroke-linecap="round">
    <path d="M625 200 C620 240 622 280 632 320 C636 340 640 360 642 372" stroke="#e6a2f8" stroke-width="1.6" opacity="0.55"/>
    <path d="M640 192 C636 220 638 245 644 262" stroke="#f0b0fa" stroke-width="1.4" opacity="0.5"/>
    <path d="M668 186 C668 210 670 232 679 264" stroke="#9a4ad0" stroke-width="1.2" opacity="0.55"/>
    <path d="M690 192 C694 215 698 235 704 260" stroke="#9a4ad0" stroke-width="1.2" opacity="0.55"/>
    <path d="M612 230 C610 270 616 310 628 346" stroke="#9448cc" stroke-width="1.3" opacity="0.5"/>
    <path d="M712 250 C716 280 722 320 730 360" stroke="#e4a0f6" stroke-width="1.3" opacity="0.5"/>
    <path d="M700 310 C708 330 716 348 726 366" stroke="#8a40c0" stroke-width="1.3" opacity="0.6"/>
  </g>
  <path d="M702 292 C714 298 722 312 726 326 C730 342 736 358 734 372 C727 374 718 367 710 357 C704 348 699 338 695 328 Z" fill="#b866e4"/>
  <path d="M706 300 C712 318 718 340 726 366" stroke="#e4a4f8" stroke-width="1.4" fill="none" opacity="0.6"/>
  <path d="M700 318 C706 334 712 350 720 362" stroke="#7e3cb4" stroke-width="1.4" fill="none" opacity="0.6"/>
  <g fill="none" stroke-linecap="round">
    <path d="M614 318 C606 332 618 346 612 362 C610 368 614 372 618 372" stroke="#b464e2" stroke-width="3"/>
    <path d="M626 330 C634 342 626 354 634 366 C637 371 640 373 642 376" stroke="#c070e8" stroke-width="3.5"/>
    <path d="M598 306 C592 318 584 326 574 334" stroke="#a858dc" stroke-width="3"/>
    <path d="M712 332 C724 342 716 354 728 366 C730 369 733 371 735 372" stroke="#b868e4" stroke-width="3.5"/>
    <path d="M700 334 C708 346 700 356 710 368" stroke="#a454da" stroke-width="3"/>
    <path d="M720 300 C728 312 724 324 730 336" stroke="#c070e8" stroke-width="3"/>
  </g>
  <!-- ears -->
  <path d="M648.6 106 C642 112 630 126 624 136 C618 146 612 156 608 172 C604 185 604 198 606 210 C612 205 620 199 625 197 C632 192 640 189 646 187 L655.6 184 C655 170 654 158 652.5 147 C651 132 650 118 648.6 106 Z" fill="#f6f6f8"/>
  <path d="M669.7 107 C665 120 661 135 659 150 C657 160 656 170 655.6 181 C662 183 670 186 677 189 C685 190 695 195 702.5 200 C702.5 190 702 178 700 168 C698 160 694 152 688 146 C684 134 678 120 669.7 107 Z" fill="#f6f6f8"/>
  <path d="M684 152 L697 155.5" stroke="#000" stroke-width="1.6"/>
  <path d="M615 170 C612 185 610 198 609 206 M622 160 C620 175 618 190 617 200 M630 150 C628 165 627 180 628 192" stroke="#cfd2da" stroke-width="1.2" fill="none" opacity="0.7"/>
  <path d="M606 212 L610 204 L613 207 L618 199 L622 202 L627 195 L631 197 L637 191 L642 192 L648 187 L655 186 L662 183 L670 186 L678 188 L684 190 L690 192 L696 195 L702 200" fill="none" stroke="#f0e8f4" stroke-width="2" opacity="0.9"/>
  <!-- eyes -->
  <path d="M640 270 C643 264 649 262 654 262 C659 262 662 266 662 270 C660 275 656 278 651 278 C646 278 642 275 640 270 Z" fill="#f2e2ea"/>
  <path d="M687 270 C689 265 693 262 697 262 C700 262 703 265 703 269 C702 274 699 277 695 277 C691 277 688 274 687 270 Z" fill="#f0e0e8"/>
  <ellipse cx="652" cy="270.5" rx="6" ry="6.8" fill="#a4441c"/>
  <ellipse cx="694.5" cy="270" rx="5.6" ry="6.6" fill="#a4441c"/>
  <ellipse cx="652" cy="273" rx="3.6" ry="3.4" fill="#e89048"/>
  <ellipse cx="694.5" cy="272.5" rx="3.4" ry="3.4" fill="#e89048"/>
  <path d="M640 268 C645 262 653 261 662 265" stroke="#3a2434" stroke-width="2" fill="none"/>
  <path d="M686 266 C691 261 698 261 703 265" stroke="#3a2434" stroke-width="2" fill="none"/>
  <path d="M656 250 L664 250" stroke="#4a6a98" stroke-width="1.2" opacity="0.8"/>
</g>
</svg>
<!-- toolbar -->
<div class="a" style="left:8px;top:109px;width:40px;height:69px;background:#2b2b2b;border-radius:4px"></div>
<div class="a" style="left:8px;top:109px;width:40px;height:34px;background:#4772b3;border-radius:4px 4px 0 0"></div>
<div class="a" style="left:8px;top:184px;width:40px;height:140px;background:#2b2b2b;border-radius:4px"></div>
<div class="a" style="left:8px;top:218px;width:40px;height:1px;background:#232323"></div>
<div class="a" style="left:8px;top:253px;width:40px;height:1px;background:#232323"></div>
<div class="a" style="left:8px;top:288px;width:40px;height:1px;background:#232323"></div>
<div class="a" style="left:8px;top:329px;width:40px;height:70px;background:#2b2b2b;border-radius:4px"></div>
<div class="a" style="left:8px;top:363px;width:40px;height:1px;background:#232323"></div>
<div class="a" style="left:8px;top:404px;width:40px;height:35px;background:#2b2b2b;border-radius:4px"></div>
<svg class="a" style="left:8px;top:109px" width="40" height="330" viewBox="0 0 40 330">
  <!-- select box -->
  <rect x="9" y="6" width="20" height="20" fill="none" stroke="#e8e8e8" stroke-width="1.2" stroke-dasharray="3 2"/>
  <path d="M17 9 L26 17 L21.5 17.5 L19 22 Z" fill="#e8e8e8"/>
  <path d="M37 30 L37 33 L34 33 Z" fill="#9ab"/>
  <!-- cursor -->
  <circle cx="20" cy="51" r="10" fill="none" stroke="#e0d0d0" stroke-width="1.6" stroke-dasharray="5 2"/>
  <path d="M20 44 V48.5 M20 53.5 V58 M13 51 H17.5 M22.5 51 H27" stroke="#b0b0b0" stroke-width="1.6"/>
  <!-- move -->
  <path d="M20 83 L17 87 H23 Z M20 101 L17 97 H23 Z M11 92 L15 89 V95 Z M29 92 L25 89 V95 Z" fill="#e8e8e8"/>
  <path d="M20 87 V89.5 M20 94.5 V97 M15 92 H17.5 M22.5 92 H25" stroke="#e8e8e8" stroke-width="1.5"/>
  <!-- rotate -->
  <path d="M12 122 A8.5 8.5 0 0 1 27 119 M28 130 A8.5 8.5 0 0 1 13 133" fill="none" stroke="#e8e8e8" stroke-width="1.4"/>
  <path d="M24 124 L30 124 L27 119 Z M10 128 L16 128 L13 133 Z" fill="#e8e8e8"/>
  <path d="M20 121 L25 126 L20 131 L15 126 Z" fill="#c8c8c8"/>
  <!-- scale -->
  <rect x="11" y="160" width="10" height="10" fill="#e0e0e0"/>
  <path d="M11 158 V154 H28 V170 H23 M20 163 L27 156 M23 155.5 H27.5 V160" fill="none" stroke="#e0e0e0" stroke-width="1.3"/>
  <path d="M37 172 L37 175 L34 175 Z" fill="#888"/>
  <!-- transform -->
  <rect x="16" y="192" width="8" height="8" fill="#e0e0e0"/>
  <path d="M12 191 A9 9 0 0 1 19 187 M21 187 A9 9 0 0 1 28 191 M28 201 A9 9 0 0 1 21 205 M19 205 A9 9 0 0 1 12 201" fill="none" stroke="#e0e0e0" stroke-width="1.4"/>
  <path d="M20 184 L18 187 H22 Z M20 208 L18 205 H22 Z M9 196 L12 194 V198 Z M31 196 L28 194 V198 Z" fill="#e0e0e0"/>
  <!-- annotate -->
  <path d="M9 244 L24 229 L27 232 L12 247 L8 248 Z" fill="#e0e0e0"/>
  <path d="M10 248 C14 245 17 240 22 243 C26 245 28 248 30 245" fill="none" stroke="#7fd0a8" stroke-width="1.3"/>
  <path d="M37 249 L37 252 L34 252 Z" fill="#888"/>
  <!-- measure -->
  <path d="M12 265 V287 H31" fill="none" stroke="#e0e0e0" stroke-width="2.4"/>
  <path d="M14 269 A16 16 0 0 1 29 285 H14 Z" fill="#7fd0a8"/>
  <path d="M15 269 H18 M15 273 H18 M15 277 H18 M15 281 H18 M17 285 V288 M21 285 V288 M25 285 V288" stroke="#e0e0e0" stroke-width="0.8"/>
  <!-- add cube -->
  <path d="M13 305 V313 M9 309 H17" stroke="#7fd0a8" stroke-width="2"/>
  <path d="M14 314 L19 310 H31 V321 L26 325 H14 Z M14 314 H26 V325 M26 314 L31 310" fill="none" stroke="#d8e8e0" stroke-width="1.2"/>
  <path d="M37 325 L37 328 L34 328 Z" fill="#888"/>
</svg>
<!-- right-side toggle -->
<svg class="a" style="left:1356px;top:116px" width="10" height="12" viewBox="0 0 10 12"><path d="M8 2 L4 6 L8 10" fill="none" stroke="#8a8a8a" stroke-width="1.2"/></svg>
<!-- gizmo -->
<svg class="a" style="left:1270px;top:100px" width="90" height="100" viewBox="1270 100 90 100">
  <line x1="1315" y1="119" x2="1315" y2="151" stroke="#4a80d8" stroke-width="2"/>
  <line x1="1300" y1="151" x2="1315" y2="151" stroke="#6aa040" stroke-width="2"/>
  <line x1="1315" y1="151" x2="1330" y2="151" stroke="#d04a5a" stroke-width="2"/>
  <circle cx="1286" cy="151" r="7.6" fill="#9a4552" stroke="#d07080" stroke-width="1"/>
  <circle cx="1300" cy="151" r="7.6" fill="#6a9a3a"/>
  <text x="1300" y="155.5" font-size="11" font-family="Liberation Sans" font-weight="bold" fill="#1a2a0a" text-anchor="middle">Y</text>
  <circle cx="1344" cy="151" r="7.6" fill="#d04656"/>
  <text x="1344" y="155.5" font-size="11" font-family="Liberation Sans" font-weight="bold" fill="#3a0a10" text-anchor="middle">X</text>
  <circle cx="1330" cy="151" r="7.6" fill="#4e7a30" stroke="#a0d060" stroke-width="1.2"/>
  <circle cx="1315" cy="119" r="7.6" fill="#4a80d8"/>
  <text x="1315" y="123.5" font-size="11" font-family="Liberation Sans" font-weight="bold" fill="#0a1a3a" text-anchor="middle">Z</text>
  <circle cx="1315" cy="183" r="7.6" fill="#36568a" stroke="#5a7ab0" stroke-width="1"/>
</svg>
<!-- nav buttons -->
<div class="a" style="left:1329px;top:191px;width:28px;height:28px;border-radius:50%;background:#111111"></div>
<div class="a" style="left:1329px;top:222px;width:28px;height:28px;border-radius:50%;background:#111111"></div>
<div class="a" style="left:1329px;top:252px;width:28px;height:28px;border-radius:50%;background:#111111"></div>
<div class="a" style="left:1329px;top:282px;width:28px;height:28px;border-radius:50%;background:#111111"></div>
<svg class="a" style="left:1333px;top:195px" width="20" height="110" viewBox="0 0 20 110">
  <circle cx="11.5" cy="8" r="6" fill="#e8e8e8"/>
  <path d="M11.5 5 V11 M8.5 8 H14.5" stroke="#141414" stroke-width="1.3"/>
  <path d="M7 12.5 L3 16.5" stroke="#e8e8e8" stroke-width="2.4" stroke-linecap="round"/>
  <path d="M3 40 C4 37 6 36 7 38 L7 31 C7 29.5 9 29.5 9 31 V36 V29 C9 27.5 11 27.5 11 29 V36 V28.5 C11 27 13 27 13 28.5 V36 V30 C13 28.5 15 28.5 15 30 V39 L16.5 36.5 C17.5 35 19 36 18 37.5 L15 45 C14 47 12 48 10 48 C7 48 5 46 3 40 Z" fill="#e8e8e8"/>
  <circle cx="7" cy="66" r="3.2" fill="#e8e8e8"/><circle cx="13" cy="65" r="3.6" fill="#e8e8e8"/>
  <circle cx="7" cy="66" r="1" fill="#141414"/><circle cx="13" cy="65" r="1" fill="#141414"/>
  <rect x="5" y="70" width="9" height="5" fill="#e8e8e8"/><path d="M14 72.5 L18 70 V75 Z" fill="#e8e8e8"/>
  <path d="M3.5 92.5 H16.5 V105.5 H3.5 Z M3.5 96.8 H16.5 M3.5 101.1 H16.5 M7.8 92.5 V105.5 M12.2 92.5 V105.5" fill="none" stroke="#e8e8e8" stroke-width="1.3"/>
</svg>
<div id="status" class="a">
  <svg class="a" style="left:11px;top:4px" width="14" height="16" viewBox="0 0 14 16"><rect x="2" y="1.5" width="9" height="13" rx="3" fill="none" stroke="#b0b0b0" stroke-width="1.1"/><path d="M2.5 7 V4 A2.5 2.5 0 0 1 5 2 H6.5 V7 Z" fill="#b0b0b0"/></svg>
  <svg class="a" style="left:221px;top:4px" width="14" height="16" viewBox="0 0 14 16"><rect x="2" y="1.5" width="9" height="13" rx="3" fill="none" stroke="#b0b0b0" stroke-width="1.1"/><rect x="5.5" y="3.5" width="2" height="4" fill="#b0b0b0"/></svg>
  <svg class="a" style="left:432px;top:4px" width="14" height="16" viewBox="0 0 14 16"><rect x="2" y="1.5" width="9" height="13" rx="3" fill="none" stroke="#b0b0b0" stroke-width="1.1"/><path d="M10.5 7 V4 A2.5 2.5 0 0 0 8 2 H6.5 V7 Z" fill="#b0b0b0"/></svg>
  <div class="t" style="left:1299px;top:6px;font-size:11.7px;color:#8a8a8a">3.6.0 Alpha</div>
</div>
<div id="taskbar" class="a">
  <svg class="a" style="left:15px;top:12px" width="18" height="17" viewBox="0 0 18 17"><path d="M0 2.2 L7.3 1.2 V8 H0 Z M8.3 1 L17 0 V8 H8.3 Z M0 9 H7.3 V15.8 L0 14.8 Z M8.3 9 H17 V17 L8.3 16 Z" fill="#fff"/></svg>
  <div class="a" style="left:48px;top:0;width:288px;height:40px;background:#f2f2f2"></div>
  <svg class="a" style="left:59px;top:11px" width="18" height="18" viewBox="0 0 18 18"><circle cx="11" cy="7" r="5.5" fill="none" stroke="#222" stroke-width="1.3"/><path d="M7 11 L1.5 16.5" stroke="#222" stroke-width="1.5"/></svg>
  <div class="t" style="left:89px;top:13px;font-size:14.4px;color:#333">Type here to search</div>
  <svg class="a" style="left:250px;top:0" width="86" height="40" viewBox="250 728 86 40">
    <path d="M256 768 L316 750 L336 760 L336 768 Z" fill="#86bf6e"/>
    <path d="M278 768 L290 762 M303 768 L314 762 M318 756 L336 766" stroke="#d8efc8" stroke-width="1"/>
    <path d="M270 733 L275 743 L284 738 L277 748 L283 756 L273 751 L267 757 L268 747 L259 743 L269 742 Z" fill="#3a78c0"/>
    <path d="M270 733 L275 743 L273 745 L268 747 L259 743 L269 742 Z" fill="#c84858"/>
    <ellipse cx="303.5" cy="749" rx="9" ry="17" transform="rotate(35 303.5 749)" fill="#9a4a22"/>
    <path d="M297 755 L311 740 M299 749 L303 753 M302 746 L306 750 M305 743 L309 747 M308 740 L312 744" stroke="#f4e4d4" stroke-width="1.2"/>
    <path d="M322 735 V752 L330 757 V740 M322 752 H330" fill="none" stroke="#e8e070" stroke-width="1.6"/>
  </svg>
  <svg class="a" style="left:350px;top:12px" width="20" height="16" viewBox="0 0 20 16"><path d="M1 1 H13 M1 15 H13 M3 4.5 H11 V11.5 H3 Z" fill="none" stroke="#fff" stroke-width="1.3"/><path d="M16 2 V4 M16 6 V9 M16 11 V14" stroke="#fff" stroke-width="1.6"/></svg>
  <svg class="a" style="left:400px;top:9px" width="22" height="22" viewBox="0 0 22 22"><path d="M1 3 H8 L10 5 H21 V19 H1 Z" fill="#e0a830"/><rect x="1" y="7" width="20" height="12" fill="#f5cc5a"/><rect x="7.5" y="12" width="7" height="7" fill="#1e6fb8"/><rect x="9.5" y="15" width="3" height="4" fill="#f5cc5a"/></svg>
  <div class="a" style="left:391px;top:37px;width:40px;height:3px;background:#76b9ed"></div>
  <svg class="a" style="left:448px;top:8px" width="24" height="24" viewBox="0 0 24 24"><ellipse cx="12" cy="12" rx="10" ry="10.5" fill="none" stroke="#b82a4a" stroke-width="2.2"/><ellipse cx="12" cy="12" rx="4.8" ry="8.3" fill="none" stroke="#c83458" stroke-width="1.6"/></svg>
  <div class="a" style="left:440px;top:37px;width:40px;height:3px;background:#76b9ed"></div>
  <svg class="a" style="left:497px;top:8px" width="22" height="24" viewBox="0 0 22 24"><path d="M9 2 L19 4 L20 19 L6 20 Z" fill="#e8f4f8"/><path d="M8 2 L18 3.5 L12 21 L2 18 Z" fill="#5ab4cc"/><path d="M8 2 L18 3.5 L16 9 L6 7 Z" fill="#a8e0ee"/></svg>
  <div class="a" style="left:489px;top:37px;width:40px;height:3px;background:#76b9ed"></div>
  <div class="a" style="left:534px;top:0;width:48px;height:40px;background:#3a5060"></div>
  <svg class="a" style="left:545px;top:9px" width="26" height="22" viewBox="0 0 26 22"><path d="M2 13 L10 7.5 L6.5 5 L14 5 L20 9" fill="none" stroke="#e87d0d" stroke-width="3" stroke-linecap="round" stroke-linejoin="round"/><circle cx="16" cy="12" r="7" fill="#e87d0d"/><circle cx="16" cy="12" r="4.6" fill="#fff"/><circle cx="16" cy="12" r="2.8" fill="#265787"/></svg>
  <div class="a" style="left:534px;top:37px;width:48px;height:3px;background:#76b9ed"></div>
  <!-- tray -->
  <svg class="a" style="left:1009px;top:8px" width="24" height="24" viewBox="0 0 24 24"><path d="M12 1 A11 11 0 1 0 23 13 A9 9 0 0 1 12 1 Z" fill="#f0a030"/></svg>
  <div class="t" style="left:1040px;top:13px;font-size:14px;color:#fff">29°C</div>
  <div class="t" style="left:1079px;top:13px;font-size:14px;color:#fff">Clear</div>
  <svg class="a" style="left:1133px;top:14px" width="16" height="10" viewBox="0 0 16 10"><path d="M1.5 8.5 L8 2 L14.5 8.5" fill="none" stroke="#fff" stroke-width="1.3"/></svg>
  <svg class="a" style="left:1156px;top:11px" width="18" height="18" viewBox="0 0 18 18"><circle cx="9" cy="9" r="7" fill="none" stroke="#fff" stroke-width="1.5"/><circle cx="9" cy="9" r="3.8" fill="#fff"/></svg>
  <svg class="a" style="left:1181px;top:10px" width="18" height="20" viewBox="0 0 18 20"><rect x="2" y="5" width="9" height="10" rx="1.5" fill="none" stroke="#fff" stroke-width="1.2"/><path d="M11 8 L15 6 V14 L11 12 M3 2 H10 M3 18 H10" fill="none" stroke="#fff" stroke-width="1.2"/></svg>
  <svg class="a" style="left:1204px;top:10px" width="20" height="20" viewBox="0 0 20 20"><path d="M2 7 H5 L9 3 V17 L5 13 H2 Z" fill="none" stroke="#fff" stroke-width="1.2"/><path d="M12 7 A4 4 0 0 1 12 13 M14.5 5 A7 7 0 0 1 14.5 15 M17 3 A10 10 0 0 1 17 17" fill="none" stroke="#fff" stroke-width="1.2"/></svg>
  <svg class="a" style="left:1228px;top:10px" width="20" height="20" viewBox="0 0 20 20"><rect x="6" y="3" width="13" height="10" fill="none" stroke="#fff" stroke-width="1.2"/><path d="M12.5 13 V17 M8 17 H17" stroke="#fff" stroke-width="1.2"/><rect x="1.5" y="4" width="4" height="4" fill="none" stroke="#fff" stroke-width="1"/></svg>
  <div class="t" style="left:1261px;top:5px;font-size:11.6px;color:#fff">1:50 PM</div>
  <div class="t" style="left:1258px;top:23px;font-size:12px;color:#fff">9/7/2023</div>
  <svg class="a" style="left:1324px;top:7px" width="28" height="28" viewBox="0 0 28 28"><path d="M2 3 H18 V15 H8 L4 19 V15 H2 Z" fill="#fff"/><path d="M5 7 H15 M5 10 H15" stroke="#1b2b45" stroke-width="1.2"/><circle cx="17" cy="19" r="7" fill="#1b2b45" stroke="#aaa" stroke-width="1"/><text x="17" y="23" font-size="11" font-family="Liberation Sans" font-weight="bold" fill="#fff" text-anchor="middle">5</text></svg>
  <div class="a" style="left:1359px;top:0;width:1px;height:40px;background:#5a6a80"></div>
</div>
</body></html>
